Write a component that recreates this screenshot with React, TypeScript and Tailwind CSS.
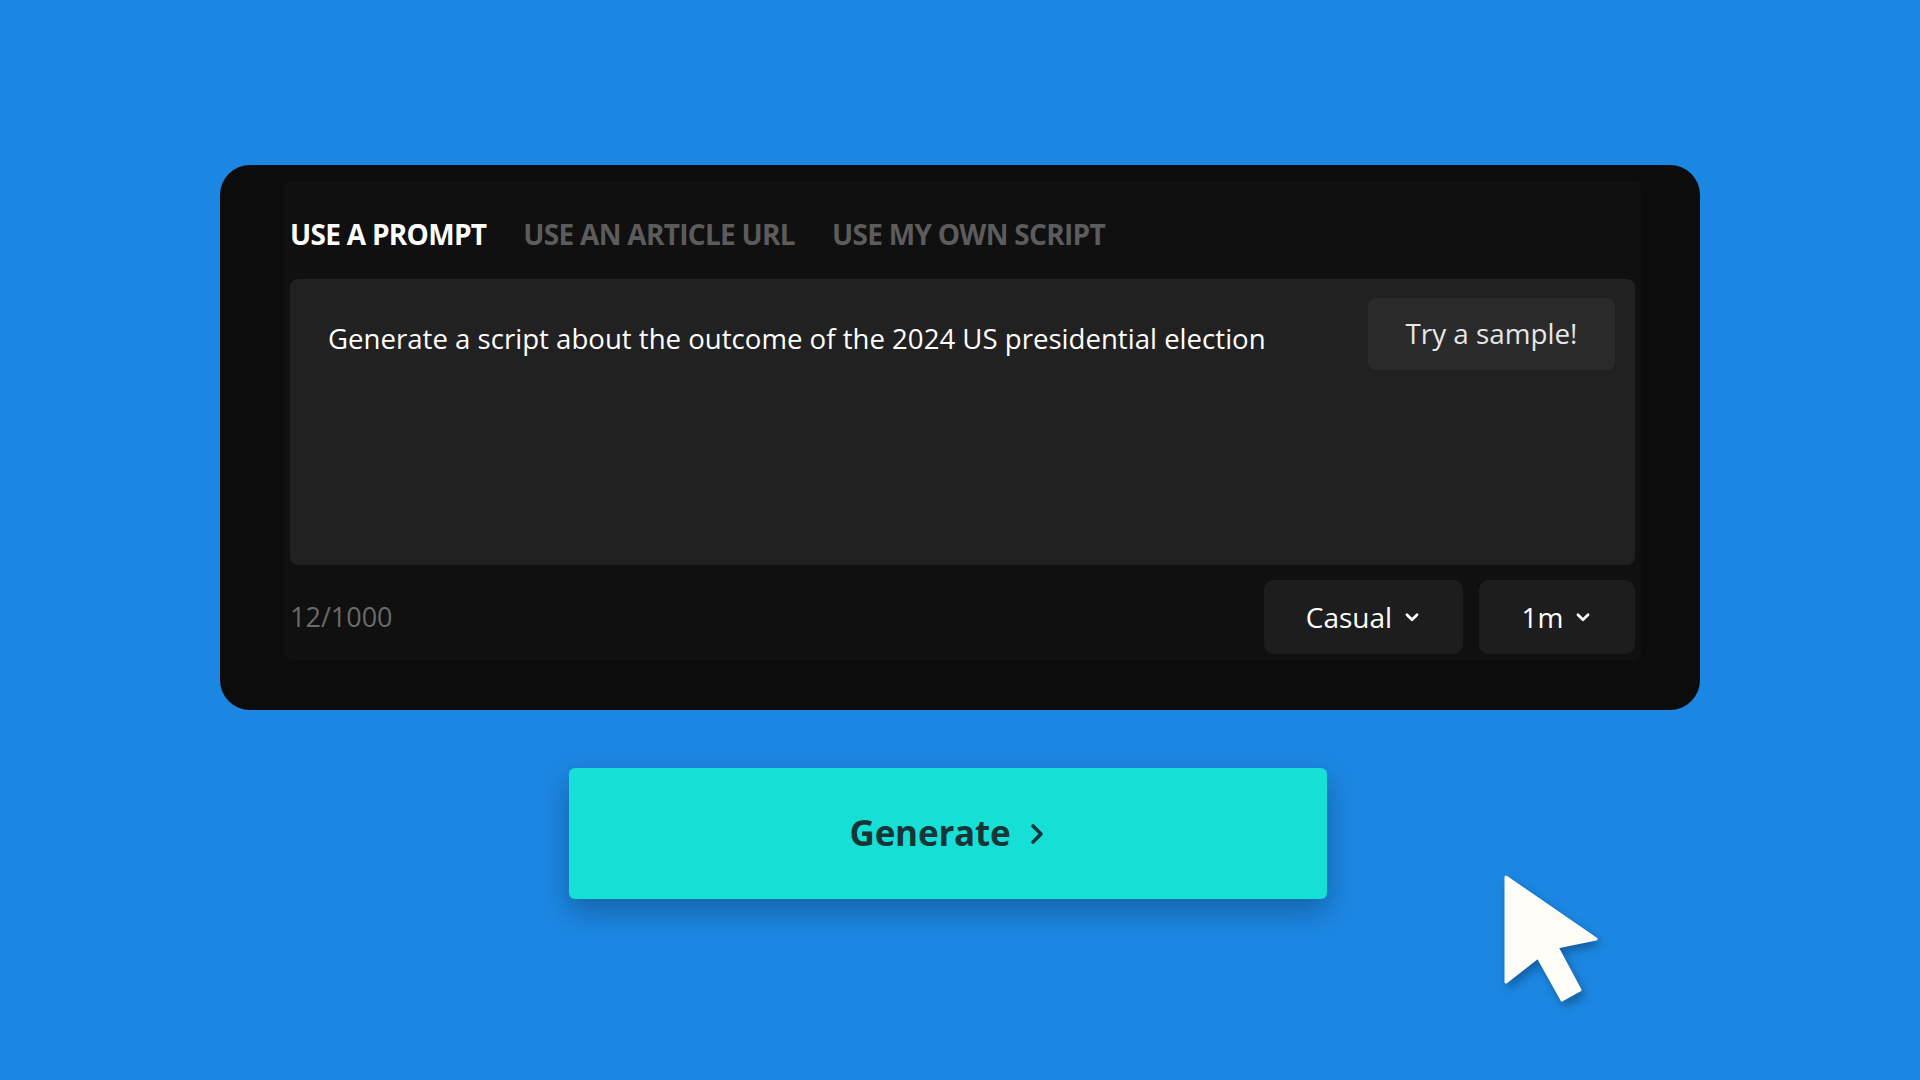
import React from 'react';

const font = { fontFamily: '"Open Sans", "Noto Sans", sans-serif' };

function ChevronDown() {
  return (
    <svg width="18" height="18" viewBox="0 0 16 16" fill="none" className="ml-[11px]">
      <path d="M3.5 6 L8 10.5 L12.5 6" stroke="#ffffff" strokeWidth="2.4" strokeLinecap="round" strokeLinejoin="round" />
    </svg>
  );
}

function Dropdown({ label, width }: { label: string; width: string }) {
  return (
    <button className={`flex h-[74px] items-center justify-center rounded-[10px] bg-[#1d1d1d] text-[28px] text-white ${width}`}>
      <span>{label}</span>
      <ChevronDown />
    </button>
  );
}

export default function App() {
  return (
    <div className="relative h-[1080px] w-[1920px] overflow-hidden bg-[#1c87e3] pt-[165px]" style={font}>
      <div className="ml-[220px] h-[545px] w-[1480px] rounded-[30px] bg-[#0c0c0c] pl-[64px] pr-[59px] pt-[16px]">
        <div className="rounded-[8px] bg-[#101010] px-[6px] pb-[6px]">
          <div className="flex h-[98px] items-center gap-[37px] pt-[8px] text-[28px] font-bold tracking-[-0.7px]">
            <span className="text-white">USE A PROMPT</span>
            <span className="text-[#5c5c5c]">USE AN ARTICLE URL</span>
            <span className="text-[#5c5c5c]">USE MY OWN SCRIPT</span>
          </div>
          <div className="relative h-[286px] rounded-[8px] bg-[#212121] pl-[38px] pt-[41px]">
            <p className="text-[27.6px] leading-[36px] text-white">
              Generate a script about the outcome of the 2024 US presidential election
            </p>
            <button className="absolute right-[20px] top-[19px] flex h-[72px] w-[247px] items-center justify-center rounded-[8px] bg-[#2a2a2a] text-[27.8px] text-[#e6e6e6]">
              Try a sample!
            </button>
          </div>
          <div className="mt-[15px] flex items-center">
            <span className="text-[27px] text-[#6a6a6a]">12/1000</span>
            <div className="ml-auto flex gap-[16px]">
              <Dropdown label="Casual" width="w-[199px]" />
              <Dropdown label="1m" width="w-[156px]" />
            </div>
          </div>
        </div>
      </div>

      <button className="ml-[569px] mt-[58px] flex h-[131px] w-[758px] items-center justify-center rounded-[6px] bg-[#16e0d6] shadow-[0_12px_30px_rgba(0,0,0,0.28)]">
        <span className="text-[35px] font-bold tracking-[-0.2px] text-[#163536]">Generate</span>
        <svg width="20" height="24" viewBox="0 0 20 24" fill="none" className="ml-[16px]">
          <path d="M6 4 L14 12 L6 20" stroke="#163536" strokeWidth="3.6" strokeLinecap="round" strokeLinejoin="round" />
        </svg>
      </button>

      <svg
        className="absolute left-[1480px] top-[850px]"
        width="150"
        height="170"
        viewBox="0 0 150 170"
        style={{ filter: 'drop-shadow(3px 5px 5px rgba(0,0,0,0.3))' }}
      >
        <polygon points="26,27 116,89 77,97 100,140 82,150 58,107 26,132" fill="#fdfcf7" strokeLinejoin="round" stroke="#fdfcf7" strokeWidth="3" />
      </svg>
    </div>
  );
}
